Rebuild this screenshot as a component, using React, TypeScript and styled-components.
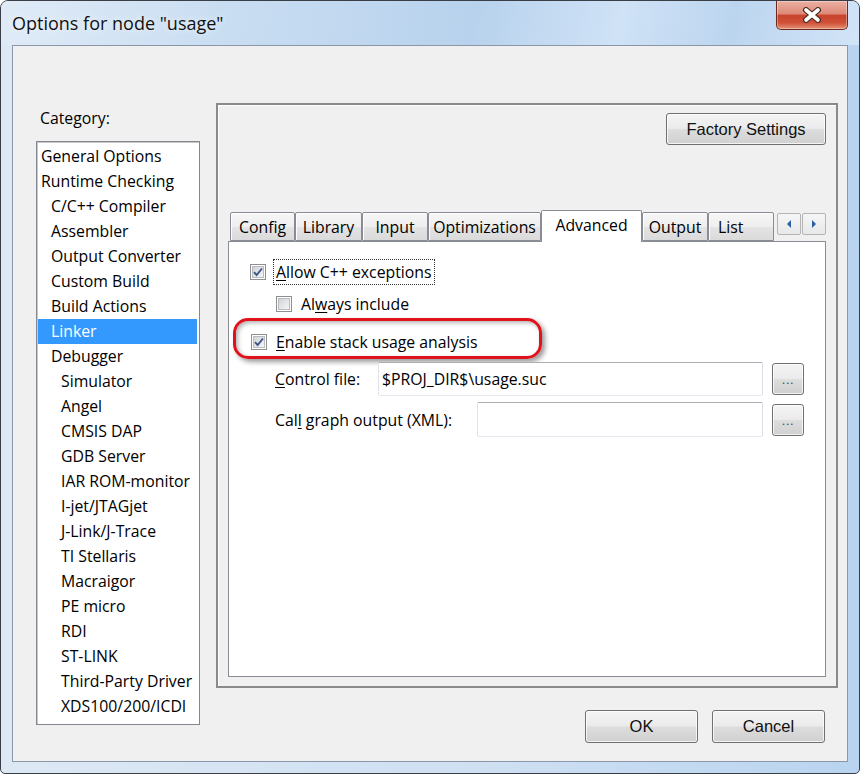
import styled, { createGlobalStyle } from "styled-components";

const GlobalStyle = createGlobalStyle`
  html, body {
    margin: 0;
    padding: 0;
    background: #ffffff;
  }
`;

const UI_FONT = `"Open Sans", "Noto Sans", "Liberation Sans", sans-serif`;
const BTN_FONT = `"Liberation Sans", "DejaVu Sans", sans-serif`;

const Window = styled.div`
  width: 860px;
  height: 774px;
  box-sizing: border-box;
  border: 1px solid #3a3f47;
  border-radius: 8px 8px 5px 5px;
  background: linear-gradient(90deg, #dde8f4 0%, #cfe0f2 55%, #b9d4f0 100%);
  display: flex;
  flex-direction: column;
  overflow: hidden;
  font-family: ${UI_FONT};
  font-size: 15.8px;
  color: #000;
`;

const TitleBar = styled.div`
  height: 44px;
  flex: none;
  display: flex;
  align-items: flex-start;
  padding-left: 11px;
  background: linear-gradient(
    100deg,
    #e0ebf7 0%,
    #cadef2 25%,
    #b8d2ed 55%,
    #cfe2f6 72%,
    #bcd5ef 85%,
    #d2e4f7 100%
  );
`;

const Title = styled.div`
  margin-top: 10px;
  font-size: 18px;
  color: #111;
  text-shadow: 0 0 6px rgba(255, 255, 255, 0.9);
`;

const CloseButton = styled.div`
  margin-left: auto;
  margin-right: 11px;
  width: 72px;
  height: 29px;
  box-sizing: border-box;
  border: 1px solid #6a2a20;
  border-top: none;
  border-radius: 0 0 5px 5px;
  background: linear-gradient(
    180deg,
    #eab0a2 0%,
    #de8a78 45%,
    #c8432c 52%,
    #cf5238 78%,
    #e59276 100%
  );
  box-shadow: inset 0 0 0 1px rgba(255, 255, 255, 0.35);
  display: flex;
  align-items: center;
  justify-content: center;
`;

const Client = styled.div`
  flex: 1;
  margin: 0 11px 11px 11px;
  background: #f0f0f0;
  border: 1px solid #8b97a8;
  display: flex;
  padding-left: 23px;
`;

const LeftColumn = styled.div`
  width: 164px;
  display: flex;
  flex-direction: column;
  padding-top: 61px;
`;

const FieldLabel = styled.div`
  height: 22px;
  line-height: 22px;
  padding-left: 4px;
  margin-bottom: 12px;
`;

const ListBox = styled.div`
  height: 584px;
  box-sizing: border-box;
  background: #fff;
  border: 1px solid #828790;
  box-shadow: inset 1px 1px 0 #c8c8c8;
  padding: 2px 2px 0 1px;
  display: flex;
  flex-direction: column;
`;

const ListItem = styled.div<{ $level: number; $selected?: boolean }>`
  height: 25px;
  line-height: 25px;
  padding-left: ${(p) => 3 + p.$level * 10}px;
  white-space: nowrap;
  background: ${(p) => (p.$selected ? "#3399ff" : "transparent")};
  color: ${(p) => (p.$selected ? "#fff" : "#000")};
`;

const RightColumn = styled.div`
  width: 622px;
  margin-left: 16px;
  padding-top: 57px;
  display: flex;
  flex-direction: column;
`;

const Panel = styled.div`
  height: 585px;
  box-sizing: border-box;
  border: 2px solid #8a8a8a;
  box-shadow: inset 1px 1px 0 #ffffff;
  padding: 8px 10px 9px 10px;
  display: flex;
  flex-direction: column;
`;

const PushButton = styled.div<{ $w: number; $h: number }>`
  width: ${(p) => p.$w}px;
  height: ${(p) => p.$h}px;
  box-sizing: border-box;
  border: 1px solid #707070;
  border-radius: 3px;
  background: linear-gradient(180deg, #f4f4f4 0%, #ebebeb 48%, #dddddd 52%, #d0d0d0 100%);
  box-shadow: inset 0 0 0 1px rgba(255, 255, 255, 0.75);
  display: flex;
  align-items: center;
  justify-content: center;
  font-family: ${BTN_FONT};
  font-size: 16.5px;
  color: #111;
`;

const FactoryRow = styled.div`
  display: flex;
  justify-content: flex-end;
`;

const TabStrip = styled.div`
  margin-top: 65px;
  height: 31px;
  display: flex;
  align-items: flex-end;
  padding-left: 2px;
  position: relative;
  z-index: 1;
`;

const Tab = styled.div<{ $w: number; $selected?: boolean; $left?: boolean }>`
  width: ${(p) => p.$w}px;
  height: ${(p) => (p.$selected ? 32 : 29)}px;
  margin-bottom: ${(p) => (p.$selected ? -1 : 0)}px;
  box-sizing: border-box;
  border: 1px solid #898c95;
  border-bottom: ${(p) => (p.$selected ? "none" : "1px solid #898c95")};
  border-radius: 2px 2px 0 0;
  background: ${(p) =>
    p.$selected
      ? "#ffffff"
      : "linear-gradient(180deg, #f6f6f6 0%, #efefef 50%, #e4e4e4 52%, #dadada 100%)"};
  box-shadow: inset 1px 1px 0 rgba(255, 255, 255, 0.9);
  display: flex;
  align-items: ${(p) => (p.$selected ? "flex-start" : "center")};
  padding-top: ${(p) => (p.$selected ? 3 : 0)}px;
  justify-content: ${(p) => (p.$left ? "flex-start" : "center")};
  padding-left: ${(p) => (p.$left ? 9 : 0)}px;
  white-space: nowrap;
  overflow: hidden;
`;

const ScrollArrows = styled.div`
  margin-left: auto;
  align-self: flex-start;
  margin-top: 3px;
  display: flex;
  gap: 1px;
`;

const ArrowButton = styled.div`
  width: 24px;
  height: 22px;
  box-sizing: border-box;
  border: 1px solid #b5b5b5;
  border-radius: 2px;
  background: linear-gradient(180deg, #f6f6f6 0%, #e8e8e8 100%);
  display: flex;
  align-items: center;
  justify-content: center;
`;

const TabPage = styled.div`
  flex: 1;
  background: #fff;
  border: 1px solid #898c95;
  display: flex;
  flex-direction: column;
`;

const CheckRow = styled.div<{ $indent: number; $gap: number }>`
  height: 22px;
  margin-top: ${(p) => p.$gap}px;
  padding-left: ${(p) => p.$indent}px;
  display: flex;
  align-items: center;
  gap: 9px;
  white-space: nowrap;
`;

const FocusText = styled.span`
  outline: 1px dotted #333;
  outline-offset: 1px;
  padding: 0 1px;
`;

const Key = styled.span`
  text-decoration: underline;
  text-underline-offset: 2px;
`;

const Callout = styled.div`
  width: 309px;
  height: 41px;
  box-sizing: border-box;
  margin: 3px 0 0 4px;
  border: 3px solid #e0121c;
  border-radius: 15px;
  box-shadow: 3px 3px 5px rgba(0, 0, 0, 0.4), inset 2px 2px 4px rgba(0, 0, 0, 0.3);
  padding: 10px 0 0 15px;
`;

const FieldRow = styled.div<{ $gap: number; $h: number }>`
  height: ${(p) => p.$h}px;
  margin-top: ${(p) => p.$gap}px;
  padding: 0 21px 0 46px;
  display: flex;
  align-items: center;
`;

const RowLabel = styled.div<{ $w: number }>`
  width: ${(p) => p.$w}px;
  flex: none;
  white-space: nowrap;
`;

const TextInput = styled.div`
  flex: 1;
  height: 100%;
  box-sizing: border-box;
  border: 1px solid;
  border-color: #abadb3 #dbdfe6 #e3e9ef #e2e3ea;
  border-radius: 2px;
  background: #fff;
  display: flex;
  align-items: center;
  padding-left: 3px;
`;

const BrowseButton = styled(PushButton)`
  margin-left: 9px;
  align-items: flex-end;
  padding-bottom: 7px;
  font-size: 13px;
  color: #444;
  letter-spacing: 0.5px;
`;

const ButtonRow = styled.div`
  margin-top: 22px;
  display: flex;
  justify-content: flex-end;
  gap: 14px;
  padding-right: 13px;
`;

const categories: [string, number][] = [
  ["General Options", 0],
  ["Runtime Checking", 0],
  ["C/C++ Compiler", 1],
  ["Assembler", 1],
  ["Output Converter", 1],
  ["Custom Build", 1],
  ["Build Actions", 1],
  ["Linker", 1],
  ["Debugger", 1],
  ["Simulator", 2],
  ["Angel", 2],
  ["CMSIS DAP", 2],
  ["GDB Server", 2],
  ["IAR ROM-monitor", 2],
  ["I-jet/JTAGjet", 2],
  ["J-Link/J-Trace", 2],
  ["TI Stellaris", 2],
  ["Macraigor", 2],
  ["PE micro", 2],
  ["RDI", 2],
  ["ST-LINK", 2],
  ["Third-Party Driver", 2],
  ["XDS100/200/ICDI", 2],
];

const tabs: { name: string; w: number }[] = [
  { name: "Config", w: 65 },
  { name: "Library", w: 67 },
  { name: "Input", w: 66 },
  { name: "Optimizations", w: 113 },
  { name: "Advanced", w: 101 },
  { name: "Output", w: 66 },
  { name: "List", w: 66 },
];

function CheckBox({ checked }: { checked: boolean }) {
  return (
    <svg width="16" height="16" viewBox="0 0 16 16">
      <defs>
        <linearGradient id="cbfill" x1="0" y1="0" x2="1" y2="1">
          <stop offset="0" stopColor="#cfd2d6" />
          <stop offset="1" stopColor="#f7f7f7" />
        </linearGradient>
      </defs>
      <rect x="0.5" y="0.5" width="15" height="15" fill="#fff" stroke="#8f8f8f" />
      <rect x="2.5" y="2.5" width="11" height="11" fill="url(#cbfill)" stroke="#b8bcc2" />
      {checked && (
        <path d="M4 8.2 L6.6 11 L12 4.5" fill="none" stroke="#3d5689" strokeWidth="1.9" />
      )}
    </svg>
  );
}

function CloseGlyph() {
  return (
    <svg width="24" height="16" viewBox="0 0 24 16">
      <path d="M6 3 L18 13 M18 3 L6 13" stroke="#4a2a24" strokeWidth="6" strokeLinecap="round" />
      <path d="M6 3 L18 13 M18 3 L6 13" stroke="#ffffff" strokeWidth="3.6" strokeLinecap="round" />
    </svg>
  );
}

function Arrow({ dir }: { dir: "left" | "right" }) {
  return (
    <svg width="8" height="10" viewBox="0 0 8 10">
      {dir === "left" ? (
        <path d="M6 1 L2 5 L6 9 Z" fill="#2a5ea8" />
      ) : (
        <path d="M2 1 L6 5 L2 9 Z" fill="#2a5ea8" />
      )}
    </svg>
  );
}

export default function App() {
  return (
    <>
      <GlobalStyle />
      <Window>
        <TitleBar>
          <Title>Options for node "usage"</Title>
          <CloseButton>
            <CloseGlyph />
          </CloseButton>
        </TitleBar>
        <Client>
          <LeftColumn>
            <FieldLabel>Category:</FieldLabel>
            <ListBox>
              {categories.map(([name, level]) => (
                <ListItem key={name} $level={level} $selected={name === "Linker"}>
                  {name}
                </ListItem>
              ))}
            </ListBox>
          </LeftColumn>
          <RightColumn>
            <Panel>
              <FactoryRow>
                <PushButton $w={160} $h={32}>
                  Factory Settings
                </PushButton>
              </FactoryRow>
              <TabStrip>
                {tabs.map((t) => (
                  <Tab
                    key={t.name}
                    $w={t.w}
                    $selected={t.name === "Advanced"}
                    $left={t.name === "List"}
                  >
                    {t.name}
                  </Tab>
                ))}
                <ScrollArrows>
                  <ArrowButton>
                    <Arrow dir="left" />
                  </ArrowButton>
                  <ArrowButton>
                    <Arrow dir="right" />
                  </ArrowButton>
                </ScrollArrows>
              </TabStrip>
              <TabPage>
                <CheckRow $indent={21} $gap={19}>
                  <CheckBox checked />
                  <FocusText>
                    <Key>A</Key>llow C++ exceptions
                  </FocusText>
                </CheckRow>
                <CheckRow $indent={47} $gap={10}>
                  <CheckBox checked={false} />
                  <span>
                    Al<Key>w</Key>ays include
                  </span>
                </CheckRow>
                <Callout>
                  <CheckRow $indent={0} $gap={0}>
                    <CheckBox checked />
                    <span>
                      <Key>E</Key>nable stack usage analysis
                    </span>
                  </CheckRow>
                </Callout>
                <FieldRow $gap={3} $h={34}>
                  <RowLabel $w={103}>
                    <Key>C</Key>ontrol file:
                  </RowLabel>
                  <TextInput>$PROJ_DIR$\usage.suc</TextInput>
                  <BrowseButton $w={32} $h={32}>...</BrowseButton>
                </FieldRow>
                <FieldRow $gap={6} $h={35}>
                  <RowLabel $w={202}>
                    Cal<Key>l</Key> graph output (XML):
                  </RowLabel>
                  <TextInput />
                  <BrowseButton $w={32} $h={32}>...</BrowseButton>
                </FieldRow>
              </TabPage>
            </Panel>
            <ButtonRow>
              <PushButton $w={113} $h={33}>
                OK
              </PushButton>
              <PushButton $w={113} $h={33}>
                Cancel
              </PushButton>
            </ButtonRow>
          </RightColumn>
        </Client>
      </Window>
    </>
  );
}
